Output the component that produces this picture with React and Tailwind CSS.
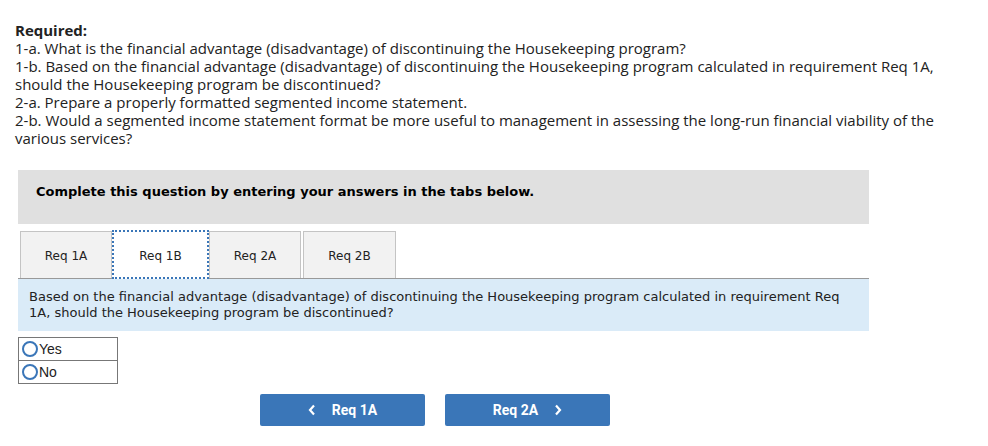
import React from "react";

const Radio = () => (
  <span className="inline-block w-[16px] h-[16px] rounded-full border-2 border-[#3a76b8] bg-white shrink-0" />
);

export default function App() {
  return (
    <div className="w-[988px] h-[446px] bg-white relative">
      <div className="pt-[21px] pl-[15px] w-[948px] text-[15px] leading-[18px] text-[#222]" style={{ fontFamily: '"Open Sans", sans-serif' }}>
        <div className="font-bold">Required:</div>
        <div>1-a. What is the financial advantage (disadvantage) of discontinuing the Housekeeping program?</div>
        <div>1-b. Based on the financial advantage (disadvantage) of discontinuing the Housekeeping program calculated in requirement Req 1A, should the Housekeeping program be discontinued?</div>
        <div>2-a. Prepare a properly formatted segmented income statement.</div>
        <div>2-b. Would a segmented income statement format be more useful to management in assessing the long-run financial viability of the various services?</div>
      </div>

      <div className="ml-[18px] w-[851px] mt-[23px]" style={{ fontFamily: '"DejaVu Sans", Verdana, sans-serif' }}>
        <div className="h-[54px] bg-[#e0e0e0] pt-[14px] pl-[18px] text-[13px] leading-[16px] font-bold text-black">
          Complete this question by entering your answers in the tabs below.
        </div>
        <div className="mt-[7px] flex items-end pl-[2px] h-[48px] border-b border-[#999]">
          <div className="w-[92px] h-[47px] pt-[2px] bg-[#f2f2f2] border border-b-0 border-[#c4c4c4] flex items-center justify-center text-[12px] text-[#222]">Req 1A</div>
          <div className="w-[97px] h-[49px] pt-[2px] -mb-px bg-white border-2 border-dotted border-[#3a76b8] flex items-center justify-center text-[12px] text-[#222]">Req 1B</div>
          <div className="w-[92px] h-[47px] pt-[2px] bg-[#f2f2f2] border border-b-0 border-[#c4c4c4] flex items-center justify-center text-[12px] text-[#222]">Req 2A</div>
          <div className="w-[93px] h-[47px] pt-[2px] ml-[2px] bg-[#f2f2f2] border border-b-0 border-[#c4c4c4] flex items-center justify-center text-[12px] text-[#222]">Req 2B</div>
        </div>
        <div className="bg-[#daebf8] h-[52px] pl-[11px] pr-[20px] pt-[10px] text-[13px] leading-[16px] text-[#222]">
          Based on the financial advantage (disadvantage) of discontinuing the Housekeeping program calculated in requirement Req 1A, should the Housekeeping program be discontinued?
        </div>
        <div className="mt-[6px] w-[100px] border border-[#777] text-[14px] text-[#222]" style={{ fontFamily: '"Liberation Sans", Arial, sans-serif' }}>
          <div className="h-[23px] flex items-center gap-[1px] pl-[3px] border-b border-[#777]"><Radio />Yes</div>
          <div className="h-[22px] flex items-center gap-[1px] pl-[3px]"><Radio />No</div>
        </div>
      </div>

      <div className="absolute left-0 top-[394px] w-full flex justify-center" style={{ fontFamily: 'Roboto, "Liberation Sans", sans-serif' }}>
        <div className="flex gap-[20px] ml-[-118px]">
          <button className="w-[165px] h-[32px] rounded-[2px] bg-[#3a76b8] text-white font-bold text-[14px] flex items-center justify-center gap-[16px]">
            <svg width="8" height="12" viewBox="0 0 8 12"><path d="M6 1.5 L2 6 L6 10.5" fill="none" stroke="white" strokeWidth="2.2" /></svg>
            Req 1A
          </button>
          <button className="w-[165px] h-[32px] rounded-[2px] bg-[#3a76b8] text-white font-bold text-[14px] flex items-center justify-center gap-[16px]">
            Req 2A
            <svg width="8" height="12" viewBox="0 0 8 12"><path d="M2 1.5 L6 6 L2 10.5" fill="none" stroke="white" strokeWidth="2.2" /></svg>
          </button>
        </div>
      </div>
    </div>
  );
}
